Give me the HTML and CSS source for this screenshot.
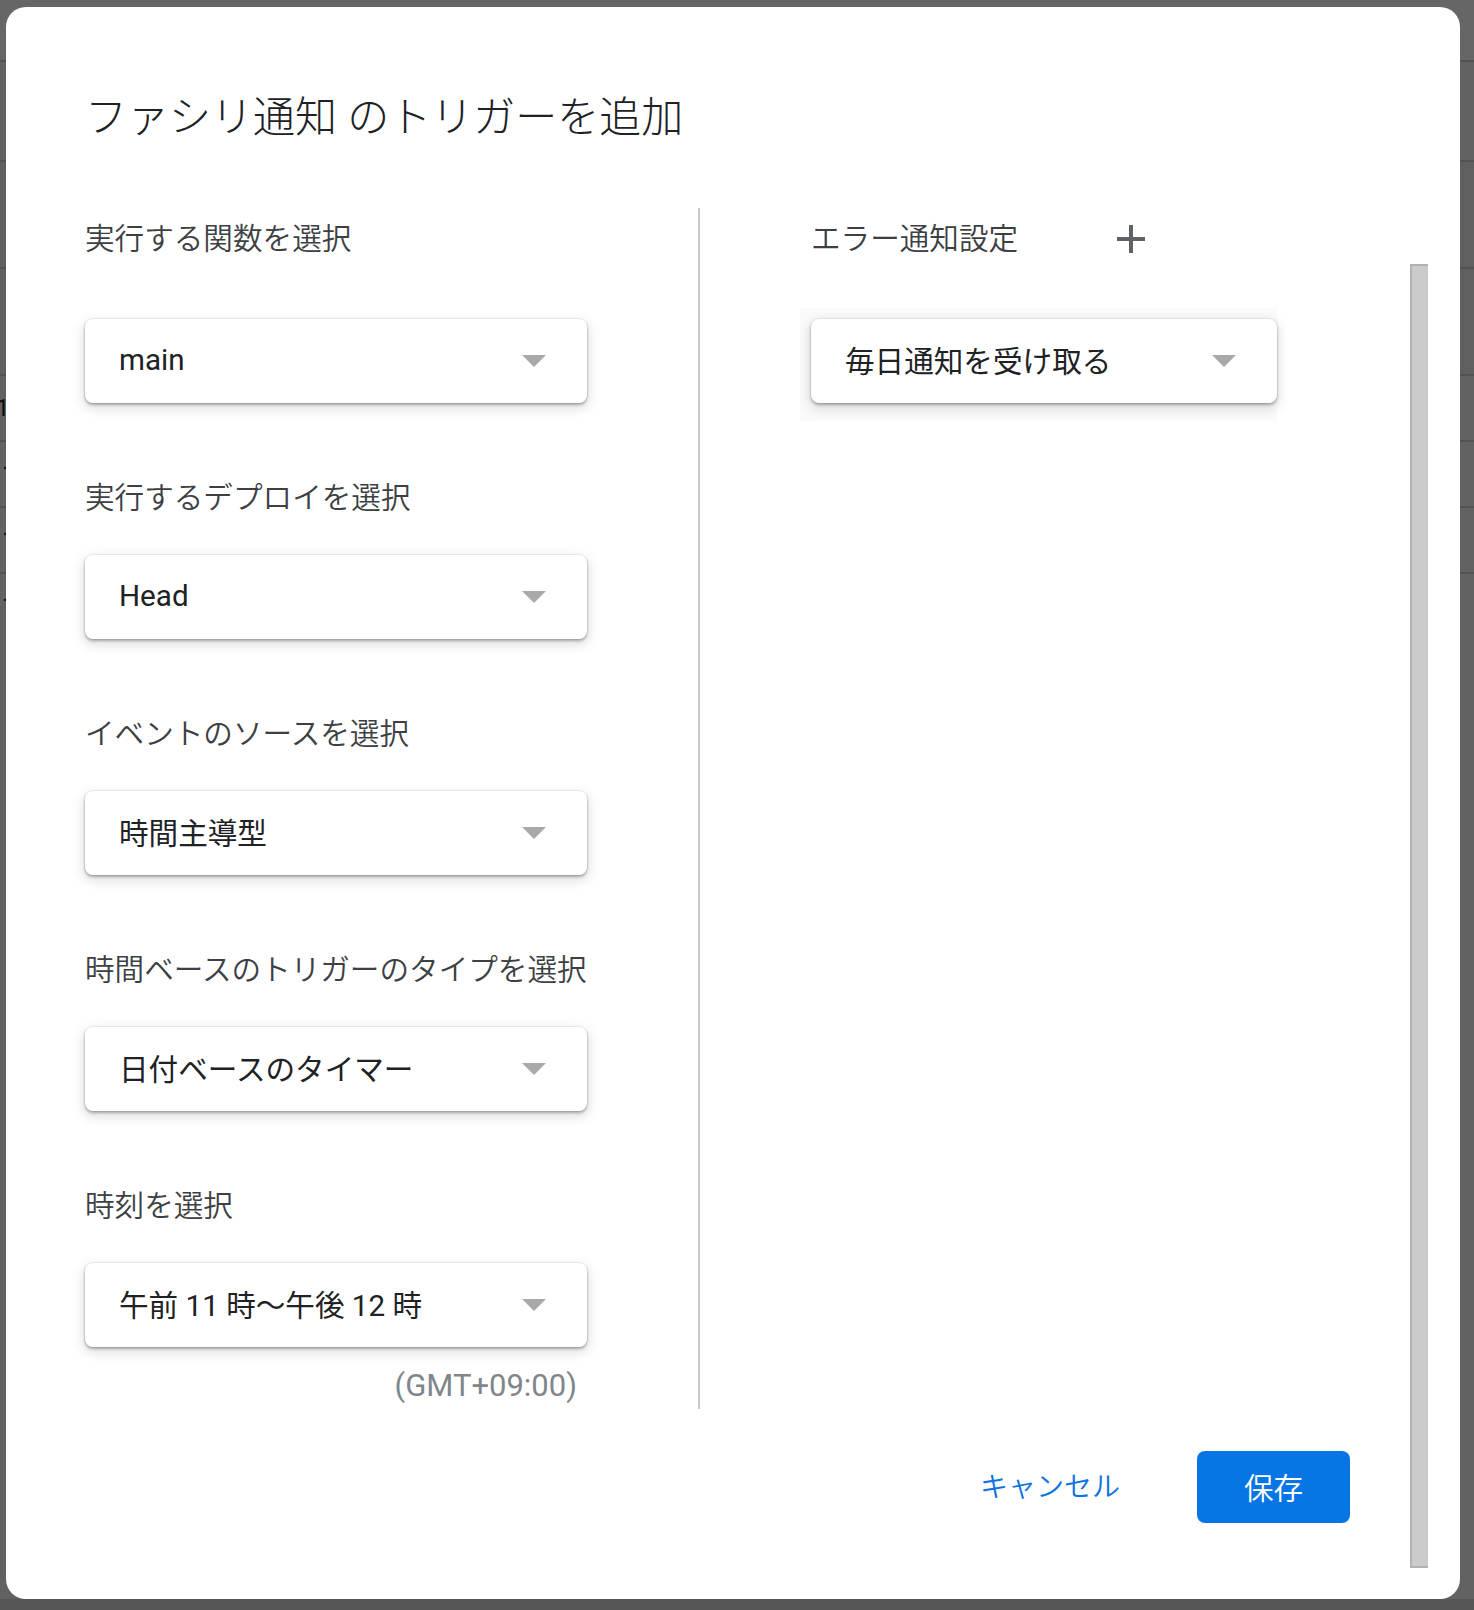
FILE: index.html
```html
<!DOCTYPE html>
<html lang="ja">
<head>
    <meta charset="UTF-8">
    <meta name="viewport" content="width=device-width, initial-scale=1.0">
    <title>トリガーを追加</title>
    <link rel="stylesheet" href="styles.css">
</head>
<body>
    <!-- 背面のトリガー一覧 -->
    <div class="page">
        <div class="page-head"></div>
        <div class="page-row page-row--tall"></div>
        <div class="page-row page-row--mid"></div>
        <div class="page-row page-row--mid"></div>
        <div class="page-row"><span class="row-no row-no--first">1</span></div>
        <div class="page-row"><span class="row-no">1</span></div>
        <div class="page-row"><span class="row-no">1</span></div>
        <div class="page-row"><span class="row-no">1</span></div>
        <div class="page-foot"></div>
    </div>

    <!-- ダイアログ -->
    <div class="overlay">
        <div class="dialog">
            <div class="dialog-main">
                <h1 class="dialog-title">ファシリ通知 のトリガーを追加</h1>

                <div class="columns">
                    <div class="col-left">
                        <div class="field">
                            <div class="field-label">実行する関数を選択</div>
                            <div class="select select--first">
                                <span class="select-text">main</span>
                                <span class="select-arrow"></span>
                            </div>
                        </div>
                        <div class="field">
                            <div class="field-label">実行するデプロイを選択</div>
                            <div class="select">
                                <span class="select-text">Head</span>
                                <span class="select-arrow"></span>
                            </div>
                        </div>
                        <div class="field">
                            <div class="field-label">イベントのソースを選択</div>
                            <div class="select">
                                <span class="select-text">時間主導型</span>
                                <span class="select-arrow"></span>
                            </div>
                        </div>
                        <div class="field">
                            <div class="field-label">時間ベースのトリガーのタイプを選択</div>
                            <div class="select">
                                <span class="select-text">日付ベースのタイマー</span>
                                <span class="select-arrow"></span>
                            </div>
                        </div>
                        <div class="field">
                            <div class="field-label">時刻を選択</div>
                            <div class="select">
                                <span class="select-text">午前 11 時〜午後 12 時</span>
                                <span class="select-arrow"></span>
                            </div>
                            <div class="timezone">(GMT+09:00)</div>
                        </div>
                    </div>

                    <div class="col-right">
                        <div class="notify-head">
                            <span class="field-label">エラー通知設定</span>
                            <button class="add-button" type="button" aria-label="追加">
                                <svg width="30" height="30" viewBox="0 0 30 30">
                                    <path d="M15 1v28M1 15h28" stroke="#5f6368" stroke-width="4" fill="none"/>
                                </svg>
                            </button>
                        </div>
                        <div class="notify-wrap">
                            <div class="select select--notify">
                                <span class="select-text">毎日通知を受け取る</span>
                                <span class="select-arrow"></span>
                            </div>
                        </div>
                    </div>
                </div>

                <div class="dialog-footer">
                    <button class="btn-cancel" type="button">キャンセル</button>
                    <button class="btn-save" type="button">保存</button>
                </div>
            </div>

            <div class="scrollbar"></div>
        </div>
    </div>
</body>
</html>
```

FILE: styles.css
```css
body {
    margin: 0;
    padding: 0;
    background-color: #ffffff;
    font-family: Roboto, "Noto Sans CJK JP", sans-serif;
    color: #202124;
}

/* 背面の一覧 */
.page {
    height: 1610px;
    display: flex;
    flex-direction: column;
    background-color: #f6f6f6;
}

.page-head {
    height: 60px;
    background-color: #ffffff;
}

.page-row {
    height: 64px;
    border-top: 2px solid #cbcbcb;
    display: flex;
    align-items: center;
}

.page-row--tall {
    height: 98px;
}

.page-row--mid {
    height: 105px;
    background-color: #eeeeee;
}

.row-no {
    font-size: 24px;
    color: #222;
    padding-left: 2px;
}

.row-no--first {
    padding-left: 0;
    margin-left: -4px;
}

.page-foot {
    margin-top: auto;
    height: 11px;
    background-color: #d6d6d6;
}

/* 暗幕 */
.overlay {
    position: fixed;
    top: 0;
    left: 0;
    right: 0;
    bottom: 0;
    background-color: rgba(0, 0, 0, 0.6);
    padding: 7px 0 0 6px;
}

.dialog {
    width: 1454px;
    height: 1592px;
    background-color: #ffffff;
    border-radius: 20px;
    display: flex;
}

.dialog-main {
    flex: 1;
    padding: 87px 60px 0 79px;
}

.dialog-title {
    margin: 0;
    font-size: 42px;
    line-height: 48px;
    font-weight: 300;
    color: #202124;
}

.columns {
    display: flex;
    margin-top: 66px;
}

.col-left {
    width: 613px;
    padding: 11px 0 3px;
    border-right: 2px solid #c7cacd;
}

.col-right {
    flex: 1;
    padding: 11px 0 0 111px;
}

.field + .field {
    margin-top: 75px;
}

.field-label {
    font-size: 29.6px;
    line-height: 40px;
    font-weight: 350;
    color: #3c4043;
}

/* プルダウン */
.select {
    width: 502px;
    height: 84px;
    box-sizing: border-box;
    margin-top: 37px;
    padding: 0 41px 3px 34px;
    display: flex;
    align-items: center;
    justify-content: space-between;
    background-color: #ffffff;
    border-radius: 8px;
    box-shadow: 0 0 0 1px rgba(0, 0, 0, 0.05), 0 2px 3px rgba(0, 0, 0, 0.28), 0 4px 12px 2px rgba(0, 0, 0, 0.12);
}

.select--first {
    margin-top: 60px;
}

.select-text {
    font-size: 29.6px;
    color: #202124;
}

.select-arrow {
    width: 0;
    height: 0;
    margin-top: 3px;
    border-left: 12px solid transparent;
    border-right: 12px solid transparent;
    border-top: 12px solid #a9a9a9;
}

.timezone {
    width: 502px;
    box-sizing: border-box;
    margin-top: 19px;
    padding-right: 10px;
    text-align: right;
    font-size: 31px;
    line-height: 40px;
    color: #80868b;
}

/* エラー通知 */
.notify-head {
    display: flex;
    align-items: center;
    height: 40px;
}

.add-button {
    margin-left: 98px;
    padding: 0;
    border: none;
    background: none;
    display: flex;
    cursor: pointer;
}

.notify-wrap {
    width: fit-content;
    margin: 49px 0 0 -11px;
    padding: 11px 0 18px 11px;
    background-color: #fafafa;
}

.select--notify {
    width: 466px;
    margin-top: 0;
}

/* フッターのボタン */
.dialog-footer {
    margin-top: 42px;
    display: flex;
    justify-content: flex-end;
    align-items: center;
}

.btn-cancel {
    height: 72px;
    margin-right: 57px;
    padding: 0 20px 4px;
    border: none;
    background: none;
    font-family: inherit;
    font-size: 28px;
    font-weight: 350;
    color: #0b73e3;
    cursor: pointer;
}

.btn-save {
    width: 153px;
    height: 72px;
    padding-bottom: 3px;
    border: none;
    border-radius: 8px;
    background-color: #0776e4;
    font-family: inherit;
    font-size: 29.6px;
    font-weight: 350;
    color: #ffffff;
    cursor: pointer;
}

/* 右カラムのスクロールバー */
.scrollbar {
    width: 16px;
    margin: 257px 32px 31px 0;
    background-color: #cbcbcb;
    border-left: 2px solid #b2b2b2;
    border-top: 2px solid #b2b2b2;
    border-bottom: 2px solid #b2b2b2;
}
```
